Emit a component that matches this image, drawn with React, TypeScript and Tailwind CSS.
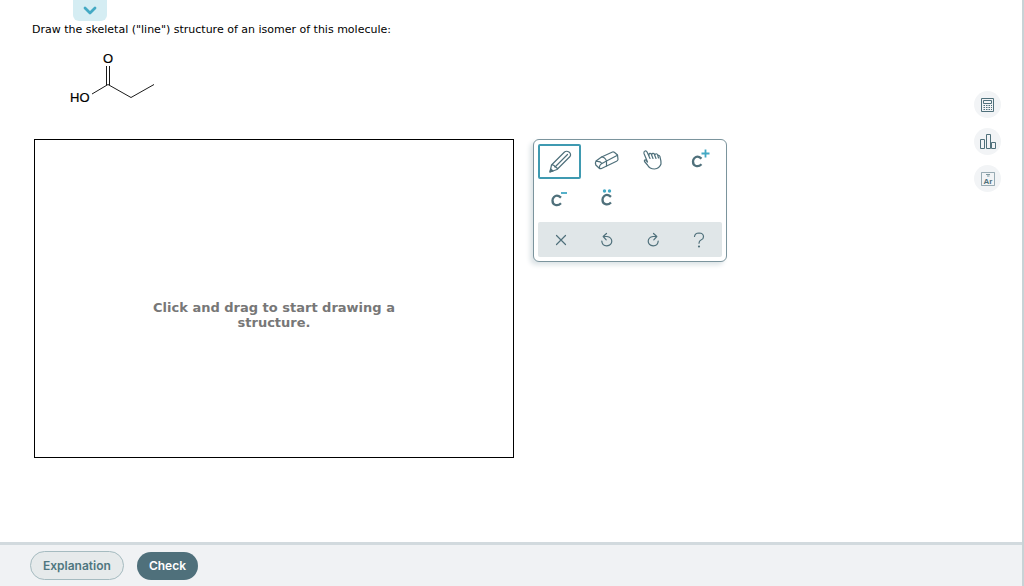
import type { ReactNode } from 'react';

function Tool({ label, selected = false, children }: { label: string; selected?: boolean; children: ReactNode }) {
  return (
    <button
      type="button"
      aria-label={label}
      aria-pressed={selected}
      className={
        'mr-[3px] mb-1 flex h-[35px] items-center justify-center rounded-xs border-2 ' +
        (selected ? 'border-[#3f9ab1]' : 'border-transparent pb-1')
      }
    >
      {children}
    </button>
  );
}

function Action({ label, children }: { label: string; children: ReactNode }) {
  return (
    <button type="button" aria-label={label} className="flex h-[35px] items-center justify-center pr-px">
      {children}
    </button>
  );
}

function SideButton({ label, children }: { label: string; children: ReactNode }) {
  return (
    <button
      type="button"
      aria-label={label}
      className="flex size-[27px] items-center justify-center rounded-full bg-[#f2f4f6] text-[#4f707b]"
    >
      {children}
    </button>
  );
}

const line = {
  fill: 'none',
  stroke: 'currentColor',
  strokeWidth: 1.2,
  strokeLinecap: 'round',
  strokeLinejoin: 'round',
} as const;

function Molecule() {
  return (
    <svg width="96" height="58" viewBox="0 0 96 58" className="block" role="img" aria-label="Propanoic acid">
      <g stroke="#000" strokeWidth="0.9" fill="none">
        <path d="M36.5 15V34M39.5 15V34M38 33.500L22 43M38 33.500L61 46.500L84 33.500" />
      </g>
      <g fontFamily="'Liberation Sans', sans-serif" fontSize="13" fill="#000" stroke="#000" strokeWidth="0.2">
        <text x="38" y="12" textAnchor="middle">O</text>
        <text x="0" y="51">HO</text>
      </g>
    </svg>
  );
}

function Toolbox() {
  return (
    <section
      aria-label="Drawing tools"
      className="w-[194px] shrink-0 rounded-md border border-[#7b949d] bg-white p-1 text-[#4f707b] shadow-[-3px_3px_5px_#dce3e6]"
    >
      <div className="grid grid-cols-4">
        <Tool label="Draw" selected>
          <svg {...line} width="24" height="24" viewBox="0 0 24 24">
            <path d="M2 22L3.500 15L16.500 2Q18.500 0.500 21 2Q23.500 4 22 6.500L9 19.500L2 22M3.500 15Q6.500 14.500 7 17Q9.500 17 9 19.500M7 17L19.500 4.500" />
            <path d="M2 22L2.700 19L5 21Z" fill="currentColor" />
          </svg>
        </Tool>
        <Tool label="Erase">
          <svg {...line} width="26" height="20" viewBox="0 0 26 20" className="ml-[2px]">
            <path d="M2 11L7.500 7L18.500 2Q19.500 1.700 20.300 2.300L23.500 5L24 9.500Q23.800 10.500 22.500 11.300L7.500 18.500Q6 19 5 18L1.800 15Q1 12.500 2 11" />
            <path d="M7.500 7Q11 7 12.500 11L23.500 5.200M12.500 11V16M2.500 11.500Q6 11 8 13.500L12.500 11M8 13.500Q5 15 5.500 18.200" />
          </svg>
        </Tool>
        <Tool label="Move">
          <svg {...line} width="22" height="22" viewBox="0 0 22 22" className="ml-[3px]">
            <path d="M5.500 13L2 4.500Q1.500 2.500 3 2Q4.500 1.700 5.200 3.300L8 9.500M7 7V5.500Q7.500 3.800 9 4.500L11 9.500M9.800 5.500Q10.500 3.800 12 4.500L14 9.500M13 5.500Q14.300 4 15.500 5.500L16.500 9M16 6.500Q17.700 6 18 8Q19.200 12 19 15Q17.500 19.500 12.500 20Q7.500 20 5.500 16L2.500 12.500Q2 10.700 3.700 11L5.500 13" />
          </svg>
        </Tool>
        <Tool label="Increase charge">
          <svg width="22" height="22" viewBox="0 0 22 22" fill="none" className="ml-[7px]">
            <path d="M11.500 9.700Q7.500 6 4.500 9Q3 10.500 3 12.500Q3 16.200 6 17Q9 17.800 11.500 15.300" stroke="currentColor" strokeWidth="2.300" />
            <path d="M11.500 4.500H19.500M15.500 0.500V8.500" stroke="#43a9c4" strokeWidth="1.800" />
          </svg>
        </Tool>
        <Tool label="Decrease charge">
          <svg width="22" height="22" viewBox="0 0 22 22" fill="none">
            <path d="M12 9.700Q8 6 5 9Q3.500 10.500 3.500 12.500Q3.500 16.200 6.500 17Q9.500 17.800 12 15.300" stroke="currentColor" strokeWidth="2.300" />
            <path d="M12 5H18" stroke="#43a9c4" strokeWidth="1.800" />
          </svg>
        </Tool>
        <Tool label="Lone pair">
          <svg width="22" height="22" viewBox="0 0 22 22" fill="none">
            <path d="M16 8.900Q12 5.200 9 8.200Q7.500 9.700 7.500 11.700Q7.500 15.400 10.500 16.200Q13.500 17 16 14.500" stroke="currentColor" strokeWidth="2.300" />
            <circle cx="9.500" cy="3" r="1.700" fill="#43a9c4" />
            <circle cx="14.500" cy="3" r="1.700" fill="#43a9c4" />
          </svg>
        </Tool>
      </div>
      <div className="grid grid-cols-4 rounded-xs bg-[#e0e6e8]">
        <Action label="Clear">
          <svg {...line} width="12" height="12" viewBox="0 0 12 12">
            <path d="M1.500 1.500L10.500 10.500M10.500 1.500L1.500 10.500" />
          </svg>
        </Action>
        <Action label="Undo">
          <svg {...line} width="14" height="16" viewBox="0 0 14 16">
            <path d="M1.800 9Q2 13.700 6.800 13.800Q11.700 13.500 11.800 9Q11.500 5.200 7 4.500H3.200M6.500 1.500L3.200 4.500L6.200 7.800" />
          </svg>
        </Action>
        <Action label="Redo">
          <svg {...line} width="14" height="16" viewBox="0 0 14 16">
            <path d="M12.200 9Q12 13.700 7.200 13.800Q2.300 13.500 2.200 9Q2.500 5.200 7 4.500H10.800M7.500 1.500L10.800 4.500L7.800 7.800" />
          </svg>
        </Action>
        <Action label="Help">
          <svg {...line} width="12" height="16" viewBox="0 0 12 16">
            <path d="M1.500 4.500Q2 1 6 1Q10.500 1.200 10.500 4.700Q10.500 7 8 8Q6 8.800 6 11.200" />
            <circle cx="6" cy="14.500" r="0.500" />
          </svg>
        </Action>
      </div>
    </section>
  );
}

export default function App() {
  return (
    <div className="flex min-h-screen flex-col border-r-2 border-[#c8d3d6] bg-white font-['DejaVu_Sans',sans-serif] text-black">
      <div className="flex flex-1 justify-between">
        <main className="min-w-0">
          <button
            type="button"
            aria-label="Expand"
            className="ml-[73px] flex h-[21px] w-[34px] items-center justify-center rounded-b-md bg-[#d5edf3] text-[#43a9c4]"
          >
            <svg width="14" height="9" viewBox="0 0 14 9" fill="none">
              <path d="M2 2L7 7L12 2" stroke="currentColor" strokeWidth="2.800" strokeLinecap="round" strokeLinejoin="round" />
            </svg>
          </button>
          <h1 className="ml-8 text-[11px] leading-[18px]">
            Draw the skeletal ("line") structure of an isomer of this molecule:
          </h1>
          <div className="mt-3 ml-[70px]">
            <Molecule />
          </div>
          <div className="mt-[30px] ml-[34px] flex items-start gap-[19px]">
            <div className="flex h-[319px] w-[480px] items-center justify-center border border-black pt-8">
              <p className="w-64 text-center text-[13px] leading-[15px] font-bold text-[#777]">
                Click and drag to start drawing a structure.
              </p>
            </div>
            <Toolbox />
          </div>
        </main>
        <aside className="mt-[91px] mr-[21px] flex flex-col gap-2.5">
          <SideButton label="Calculator">
            <svg width="13" height="14" viewBox="0 0 13 14" fill="none" stroke="currentColor">
              <path d="M0.500 0.500H12.500V13.500H0.500ZM2.500 2.500H10.500V5.500H2.500Z" />
              <path d="M2.500 7.500H11M2.500 9.500H11M2.500 11.500H11" strokeDasharray="1.500 1" />
            </svg>
          </SideButton>
          <SideButton label="Data">
            <svg width="16" height="16" viewBox="0 0 16 16" fill="none" stroke="currentColor">
              <path d="M0.500 5.500H4.500V14.500H0.500ZM6.500 0.500H10.500V14.500H6.500ZM11.500 8.500H15.500V14.500H11.500Z" />
            </svg>
          </SideButton>
          <SideButton label="Periodic table">
            <svg width="14" height="14" viewBox="0 0 14 14" fill="none" stroke="currentColor">
              <path d="M0.500 0.500H13.500V13.500H0.500Z" strokeOpacity="0.550" />
              <path d="M5 2.500H9M6 4H8.500" strokeOpacity="0.700" />
              <text x="7" y="11.500" textAnchor="middle" fontFamily="'Liberation Sans', sans-serif" fontSize="8" fontWeight="700" fill="currentColor" stroke="none">Ar</text>
            </svg>
          </SideButton>
        </aside>
      </div>
      <footer className="flex items-center gap-[13px] border-t-[3px] border-[#d2dade] bg-[#f0f2f4] py-1.5 pl-[30px] font-[Inter,sans-serif] text-[12px] font-semibold">
        <button type="button" className="h-[29px] rounded-full border border-[#a5bbc0] bg-[#e6eaeb] px-3 text-[#4f7780]">
          Explanation
        </button>
        <button type="button" className="h-7 rounded-full bg-[#4f707b] px-3 text-white">
          Check
        </button>
      </footer>
    </div>
  );
}
